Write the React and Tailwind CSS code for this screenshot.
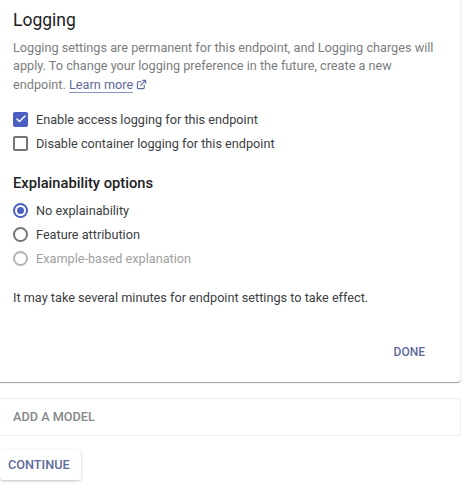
import { Check, ExternalLink } from 'lucide-react';

const bodyFont = "font-['Roboto',sans-serif]";

function Radio({ checked, disabled, label }) {
  return (
    <div className="flex h-6 items-center">
      <span
        className={`flex h-[15px] w-[15px] items-center justify-center rounded-full border-2 ${
          checked ? 'border-[#4a5fc1]' : disabled ? 'border-[#b4b4b4]' : 'border-[#757575]'
        }`}
      >
        {checked && <span className="h-[7px] w-[7px] rounded-full bg-[#4a5fc1]" />}
      </span>
      <span className={`ml-[8px] text-[12.7px] ${disabled ? 'text-[#a0a0a0]' : 'text-[#3c4043]'}`}>{label}</span>
    </div>
  );
}

export default function App() {
  return (
    <div className={`h-[493px] w-[474px] overflow-hidden bg-white ${bodyFont}`}>
      {/* Logging card */}
      <div className="h-[382px] w-[461px] rounded-br-[4px] border-r border-[#f0f0f0] px-[13px] pt-[9px] shadow-[0_1px_1px_rgba(0,0,0,0.4)]">
        <h2 className="text-[17.5px] leading-[22px] text-[#202124]">Logging</h2>
        <p className="mt-[8px] max-w-[425px] text-[12.7px] leading-[18.3px] text-[#7a7d80]">
          Logging settings are permanent for this endpoint, and Logging charges will apply. To change your logging
          preference in the future, create a new endpoint.{' '}
          <span className="border-b border-[#8a94c4] text-[#5f6a9c]">Learn more</span>
          <ExternalLink size={11} strokeWidth={2.4} className="ml-[3px] inline-block align-[-1px] text-[#5f6a9c]" />
        </p>

        <div className="mt-[13px] flex h-[25px] items-center">
          <span className="flex h-[15px] w-[15px] items-center justify-center rounded-[2px] bg-[#4a5fc1]">
            <Check size={12} strokeWidth={3} className="text-white" />
          </span>
          <span className="ml-[8px] text-[12.7px] text-[#3c4043]">Enable access logging for this endpoint</span>
        </div>
        <div className="flex h-6 items-center">
          <span className="h-[15px] w-[15px] rounded-[2px] border-2 border-[#757575]" />
          <span className="ml-[8px] text-[12.7px] text-[#3c4043]">Disable container logging for this endpoint</span>
        </div>

        <h3 className="mt-[17px] text-[14.7px] font-medium leading-[20px] text-[#202124]">Explainability options</h3>
        <div className="mt-[6px]">
          <Radio checked label="No explainability" />
          <Radio label="Feature attribution" />
          <Radio disabled label="Example-based explanation" />
        </div>

        <p className="mt-[18px] text-[12.7px] leading-[18px] text-[#3c4043]">
          It may take several minutes for endpoint settings to take effect.
        </p>

        <div className="mt-[36px] flex justify-end pr-[22px]">
          <span className="text-[12px] font-medium text-[#5f6a9c]">DONE</span>
        </div>
      </div>

      {/* Add a model */}
      <div className="mt-[16px] flex h-[38px] w-[461px] items-center rounded-br-[3px] border-y border-r border-[#eeeeee] px-[13px]">
        <span className="text-[12.7px] font-medium text-[#85888b]">ADD A MODEL</span>
      </div>

      {/* Continue */}
      <div className="mt-[14px] flex h-[30px] w-[81px] items-center rounded-[3px] pl-[8px] shadow-[0_1px_3px_rgba(0,0,0,0.25)]">
        <span className="text-[12.7px] font-medium text-[#5f6a9c]">CONTINUE</span>
      </div>
    </div>
  );
}
